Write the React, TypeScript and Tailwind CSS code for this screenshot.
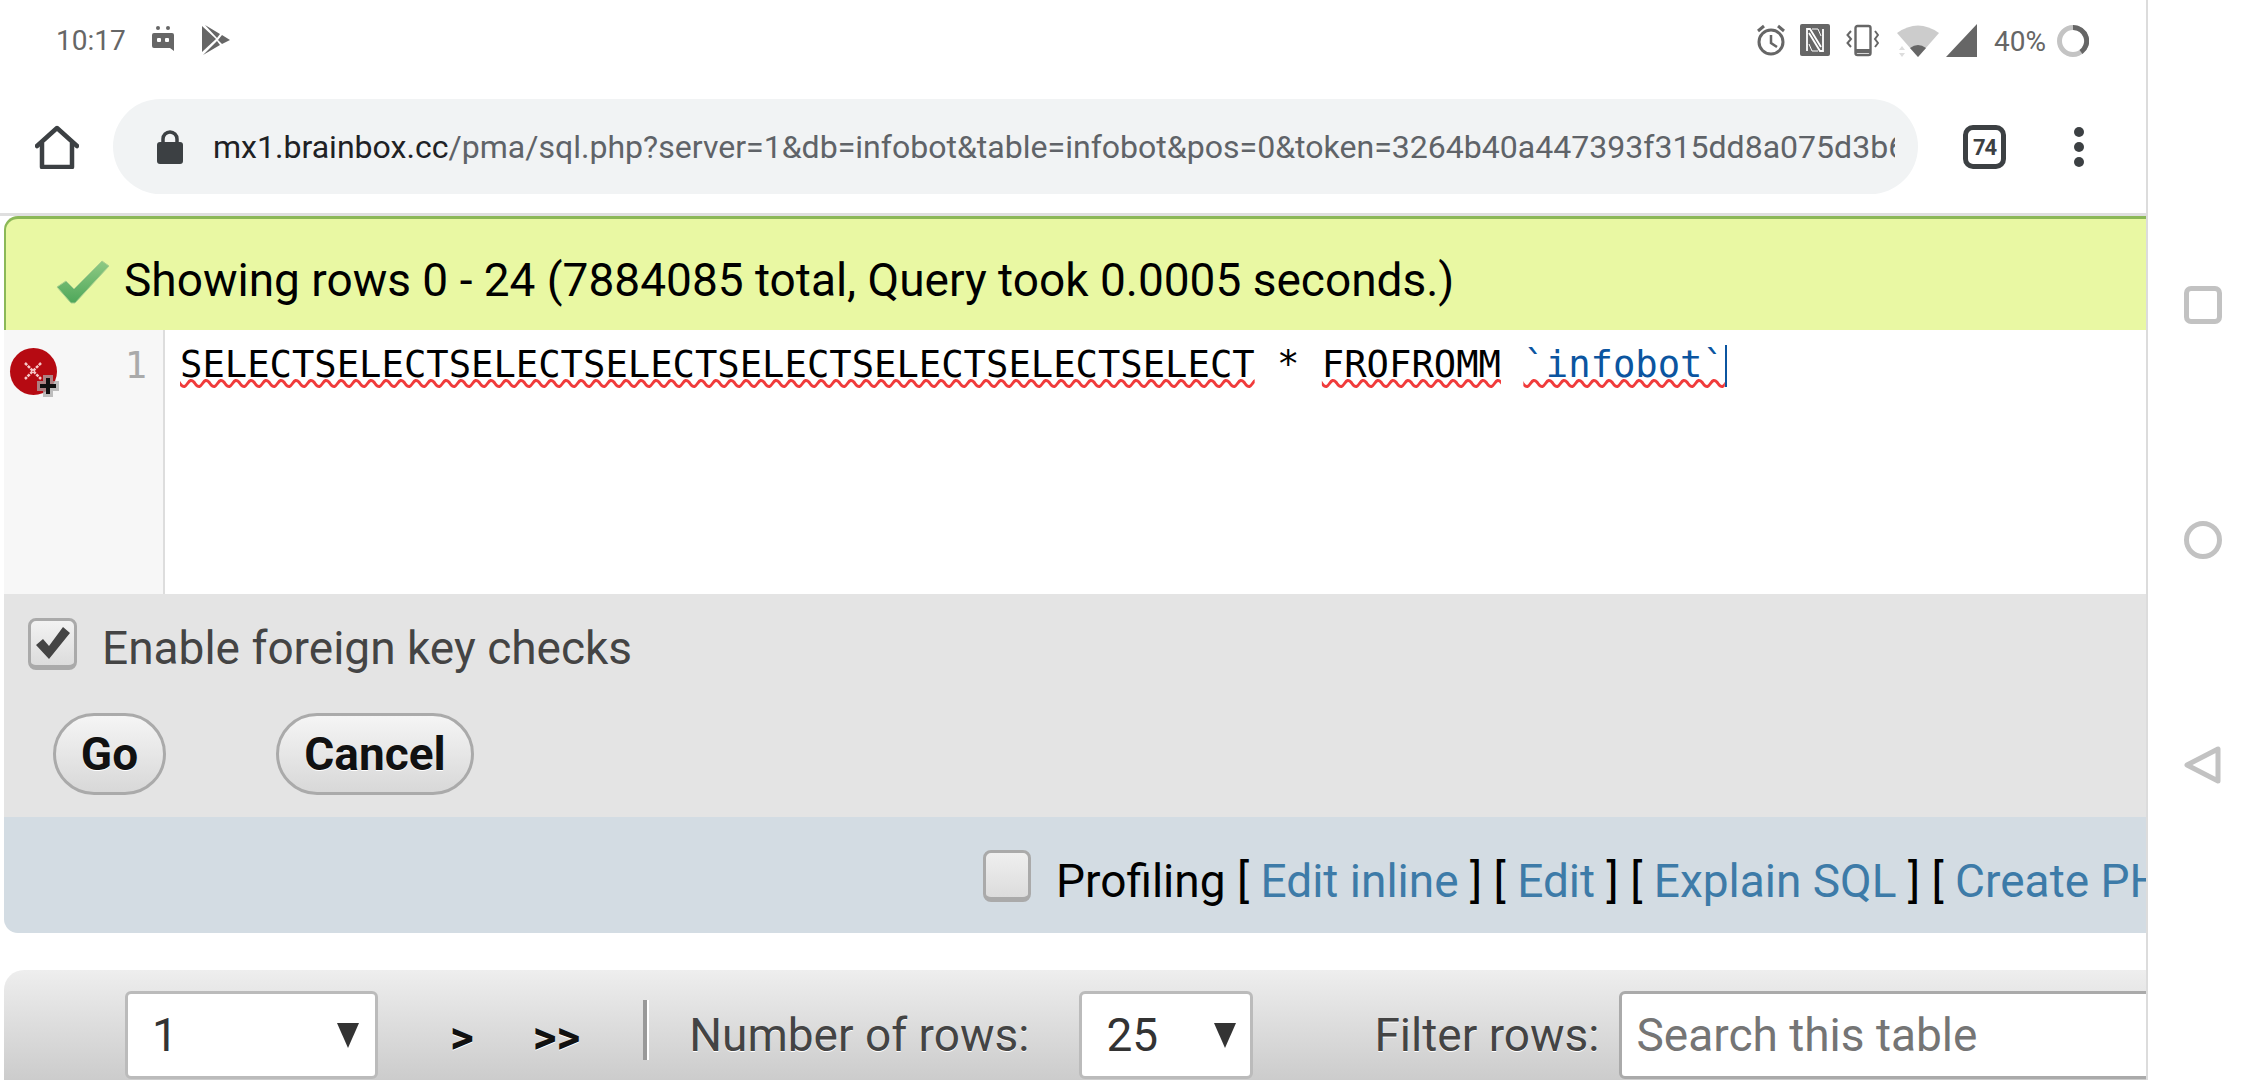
import React from "react";

const Alarm = () => (
  <svg width="30" height="33" viewBox="0 0 30 33" fill="none" stroke="#666" strokeWidth="3">
    <circle cx="15" cy="18" r="12" />
    <path d="M15 11v8l6 4" strokeWidth="2.5" />
    <path d="M2 7l6-5M28 7l-6-5" strokeWidth="3" />
  </svg>
);
const Nfc = () => (
  <svg width="30" height="32" viewBox="0 0 30 32">
    <rect width="30" height="32" rx="2" fill="#666" />
    <path d="M7 27V5h3l11 18M23 5v22h-3L9 9" fill="none" stroke="#fff" strokeWidth="1.8" />
    <path d="M12 5h6l3 7M18 27h-6l-3-7" fill="none" stroke="#fff" strokeWidth="1" />
  </svg>
);
const Vibrate = () => (
  <svg width="33" height="33" viewBox="0 0 33 33" fill="none" stroke="#666" strokeWidth="2.4">
    <rect x="9.5" y="2" width="15" height="29" rx="2" />
    <path d="M10 27h14" strokeWidth="4" />
    <path d="M5 7L1.5 11 5 15 1.5 19 5 23M29 7l3 4-3 4 3 4-3 4" strokeWidth="2" />
  </svg>
);
const Wifi = () => (
  <svg width="44" height="34" viewBox="0 0 44 34">
    <path d="M1 9 Q22 -6 43 9 L22 33 Z" fill="#ccc" />
    <path d="M14 24 Q22 18 30 24 L22 33 Z" fill="#666" />
    <path d="M3 26l3-4 3 4zM3 29l3 4 3-4z" fill="#ddd" />
  </svg>
);
const Signal = () => (
  <svg width="31" height="33" viewBox="0 0 31 33">
    <path d="M31 0V33H0Z" fill="#666" />
  </svg>
);
const Ring = () => (
  <svg width="32" height="34" viewBox="0 0 32 34" fill="none" strokeWidth="5">
    <circle cx="16" cy="17" r="13.5" stroke="#c4c4c4" />
    <path d="M16 3.5A13.5 13.5 0 0 1 24 28" stroke="#666" />
  </svg>
);
const Bot = () => (
  <svg width="23" height="27" viewBox="0 0 23 27">
    <circle cx="6" cy="3" r="2" fill="#666" />
    <circle cx="16" cy="3" r="2" fill="#666" />
    <path d="M2 8h18a2 2 0 0 1 2 2v16l-4-3H2a2 2 0 0 1-2-2V10a2 2 0 0 1 2-2z" fill="#666" />
    <rect x="5" y="13" width="4" height="4" rx="1" fill="#fff" />
    <rect x="13" y="13" width="4" height="4" rx="1" fill="#fff" />
  </svg>
);
const Play = () => (
  <svg width="28" height="30" viewBox="0 0 28 30">
    <path d="M0 1l14 13L0 27z" fill="#666" />
    <path d="M3 0l15 9-3 4zM16 15l4 -5 8 5-8 4zM15 16l3 4L1 30z" fill="#666" />
  </svg>
);
const Home = () => (
  <svg width="44" height="44" viewBox="0 0 44 44" fill="none" stroke="#3c4043" strokeWidth="4.5" strokeLinejoin="round" strokeLinecap="round">
    <path d="M2 21L22 3l20 18" />
    <path d="M7 18v24h30V18" />
  </svg>
);
const Lock = () => (
  <svg width="26" height="34" viewBox="0 0 26 34">
    <path d="M6 13V9a7 7 0 0 1 14 0v4" fill="none" stroke="#3c4043" strokeWidth="3.5" />
    <rect y="12" width="26" height="22" rx="3" fill="#3c4043" />
  </svg>
);
const Check = () => (
  <svg width="54" height="44" viewBox="0 0 54 44">
    <defs>
      <linearGradient id="ck" x1="0" y1="0" x2="0" y2="1">
        <stop offset="0" stopColor="#8fca84" />
        <stop offset="1" stopColor="#4ea75a" />
      </linearGradient>
    </defs>
    <path d="M1 27l9-6 8 8L46 1l7 5-34 37h-4z" fill="url(#ck)" stroke="#a9cf8f" strokeWidth="1" />
  </svg>
);
const ErrorMark = () => (
  <div className="relative w-[47px] h-[47px] rounded-full bg-[#b60a12]">
    <svg className="absolute left-[11px] top-[11px]" width="24" height="24" viewBox="0 0 24 24" stroke="#f6c9c9" strokeWidth="2.5" strokeDasharray="3 1">
      <path d="M4 4l16 16M20 4L4 20" />
    </svg>
    <svg className="absolute left-[25px] top-[25px]" width="26" height="26" viewBox="0 0 26 26">
      <path d="M8 2h10v6h6v10h-6v6H8v-6H2V8h6z" fill="#aaa" opacity="0.75" />
      <path d="M11 5h4v6h6v4h-6v6h-4v-6H5v-4h6z" fill="#111" />
    </svg>
  </div>
);
const Tick = () => (
  <svg width="36" height="32" viewBox="0 0 36 32">
    <path d="M1 18l7-6 6 7L28 0l7 6-21 26z" fill="#444" />
  </svg>
);
const Arrow = () => (
  <svg width="22" height="25" viewBox="0 0 22 25">
    <path d="M0 0h22L11 25z" fill="#333" />
  </svg>
);

export default function App() {
  const shadow = "[text-shadow:0_1px_0_#fff]";
  return (
    <div className="flex w-[2260px] h-[1080px] overflow-hidden bg-white font-['Roboto',sans-serif]">
      <div className="w-[2148px] shrink-0 h-full flex flex-col border-r-2 border-[#dcdcdc] overflow-hidden">
        <div className="h-[99px] shrink-0 flex items-start pt-[25px] pl-[56px] pr-[57px] text-[#666]">
          <span className="text-[28px] leading-[30px] mt-[1px] w-[96px]">10:17</span>
          <Bot />
          <span className="ml-[27px]"><Play /></span>
          <span className="ml-auto -mt-[1px] flex items-start">
            <span className="w-[44px]"><Alarm /></span>
            <span className="w-[46px]"><Nfc /></span>
            <span className="w-[50px]"><Vibrate /></span>
            <span className="w-[50px]"><Wifi /></span>
            <span className="w-[48px]"><Signal /></span>
            <span className="w-[63px] text-[28px] leading-[30px] mt-[3px]">40%</span>
            <Ring />
          </span>
        </div>
        <div className="h-[117px] shrink-0 flex items-start border-b-[3px] border-[#dfdfdf]">
          <span className="ml-[35px] mt-[26px] w-[78px]"><Home /></span>
          <div className="w-[1805px] h-[95px] rounded-[48px] bg-[#f1f3f4] flex items-center pl-[44px] pr-[23px]">
            <Lock />
            <div className="ml-[30px] mt-[2px] flex-1 whitespace-nowrap overflow-hidden text-[32.05px] text-[#5f6368]">
              <span className="text-[#202124]">mx1.brainbox.cc</span>/pma/sql.php?server=1&amp;db=infobot&amp;table=infobot&amp;pos=0&amp;token=3264b40a447393f315dd8a075d3b6e
            </div>
          </div>
          <div className="ml-[45px] mt-[26px] w-[43px] h-[44px] rounded-[10px] border-[5px] border-[#3c4043] flex items-center justify-center text-[22px] font-bold text-[#3c4043] tracking-[-1px]">
            74
          </div>
          <div className="ml-[68px] mt-[28px] flex flex-col gap-[5px]">
            <span className="w-[10px] h-[10px] rounded-full bg-[#3c4043]" />
            <span className="w-[10px] h-[10px] rounded-full bg-[#3c4043]" />
            <span className="w-[10px] h-[10px] rounded-full bg-[#3c4043]" />
          </div>
        </div>
        <div className="ml-[4px] flex-1 min-h-0 flex flex-col overflow-hidden">
          <div className="h-[114px] shrink-0 bg-[#e9f8a3] border-t-[3px] border-l-2 border-[#8bb857] rounded-tl-[14px] flex items-center pl-[50px] pt-[12px]">
            <span className="w-[68px] mt-[2px]"><Check /></span>
            <span className="text-[46px] text-black whitespace-nowrap">Showing rows 0 - 24 (7884085 total, Query took 0.0005 seconds.)</span>
          </div>
          <div className="h-[264px] shrink-0 flex bg-white">
            <div className="w-[161px] shrink-0 bg-[#f7f7f7] border-r-2 border-[#ddd] flex items-start pt-[16px] pl-[6px]">
              <span className="mt-[2px]"><ErrorMark /></span>
              <span className="ml-auto pr-[16px] font-['DejaVu_Sans_Mono',monospace] text-[37px] leading-[40px] text-[#aaa]">1</span>
            </div>
            <div className="pl-[15px] pt-[11px] whitespace-pre font-['DejaVu_Sans_Mono',monospace] text-[37.2px] leading-[46px] text-black">
              <span className="underline decoration-wavy decoration-[#f03b3b] decoration-[3px] underline-offset-2">SELECTSELECTSELECTSELECTSELECTSELECTSELECTSELECT</span>
              <span> * </span>
              <span className="underline decoration-wavy decoration-[#f03b3b] decoration-[3px] underline-offset-2">FROFROMM</span>
              <span> </span>
              <span className="text-[#0b55a0] underline decoration-wavy decoration-[#f03b3b] decoration-[3px] underline-offset-2">`infobot`</span>
              <span className="inline-block w-[2px] h-[42px] -mb-[10px] bg-[#0b55a0]" />
            </div>
          </div>
          <div className="h-[223px] shrink-0 bg-[#e4e4e4] flex flex-col">
            <div className="flex items-start pl-[24px] pt-[24px]">
              <div className="w-[49px] h-[52px] rounded-[8px] border-[3px] border-[#aaa] border-b-[5px] bg-gradient-to-b from-[#f2f2f2] to-[#dcdcdc] flex items-center justify-center">
                <Tick />
              </div>
              <span className="ml-[25px] mt-[3px] text-[46px] leading-[54px] text-[#444] whitespace-nowrap">Enable foreign key checks</span>
            </div>
            <div className="flex pl-[49px] mt-[38px]">
              <button className={`w-[113px] h-[82px] rounded-[41px] border-[3px] border-[#aaa] bg-gradient-to-b from-[#f5f5f5] to-[#d8d8d8] text-[46px] leading-[70px] font-bold text-[#111] ${shadow}`}>Go</button>
              <button className={`ml-[110px] w-[198px] h-[82px] rounded-[41px] border-[3px] border-[#aaa] bg-gradient-to-b from-[#f5f5f5] to-[#d8d8d8] text-[46px] leading-[70px] font-bold text-[#111] ${shadow}`}>Cancel</button>
            </div>
          </div>
          <div className="h-[116px] shrink-0 bg-[#d3dce3] rounded-bl-[14px] flex items-center pl-[979px] whitespace-nowrap text-[46px] text-black overflow-hidden">
            <div className="w-[48px] h-[52px] shrink-0 rounded-[8px] border-[3px] border-[#aaa] border-b-[5px] bg-gradient-to-b from-[#efefef] to-[#dcdcdc] mt-[2px]" />
            <span className="ml-[25px] mt-[12px]">Profiling [ <span className="text-[#3d7ba8]">Edit inline</span> ] [ <span className="text-[#3d7ba8]">Edit</span> ] [ <span className="text-[#3d7ba8]">Explain SQL</span> ] [ <span className="text-[#3d7ba8]">Create PHP code</span> ]</span>
          </div>
          <div className="mt-[37px] h-[110px] shrink-0 rounded-tl-[20px] bg-gradient-to-b from-[#eeeeee] to-[#cccccc] flex items-start pt-[21px] pl-[121px] whitespace-nowrap text-[#444] text-[46px]">
            <div className="w-[253px] h-[88px] shrink-0 rounded-[6px] border-[3px] border-[#bbb] bg-white flex items-center justify-between pl-[24px] pr-[16px] text-[#333]">
              <span>1</span><Arrow />
            </div>
            <span className={`ml-[72px] mt-[12px] font-bold text-[#111] ${shadow}`}>&gt;</span>
            <span className={`ml-[59px] mt-[12px] font-bold text-[#111] ${shadow}`}>&gt;&gt;</span>
            <div className="ml-[63px] mt-[9px] w-[6px] h-[60px] shrink-0 border-l-[4px] border-[#999] border-r-2 border-r-white" />
            <span className={`ml-[40px] mt-[10px] ${shadow}`}>Number of rows:</span>
            <div className="ml-[50px] w-[174px] h-[88px] shrink-0 rounded-[6px] border-[3px] border-[#bbb] bg-white flex items-center justify-between pl-[24px] pr-[14px] text-[#333]">
              <span>25</span><Arrow />
            </div>
            <span className={`ml-[121px] mt-[10px] ${shadow}`}>Filter rows:</span>
            <div className="ml-[19px] w-[600px] h-[88px] shrink-0 rounded-l-[6px] border-[3px] border-[#aaa] bg-white flex items-center pl-[15px] text-[#757575]">
              Search this table
            </div>
          </div>
        </div>
      </div>
      <div className="flex-1 flex flex-col items-center pt-[286px] pr-[2px]">
        <div className="w-[38px] h-[38px] rounded-[7px] border-[5px] border-[#c2c2c2]" />
        <div className="mt-[197px] w-[38px] h-[38px] rounded-full border-[5px] border-[#c2c2c2]" />
        <svg className="mt-[187px]" width="38" height="38" viewBox="0 0 38 38" fill="none" stroke="#c2c2c2" strokeWidth="5" strokeLinejoin="round">
          <path d="M34 3v32L3 19z" />
        </svg>
      </div>
    </div>
  );
}
